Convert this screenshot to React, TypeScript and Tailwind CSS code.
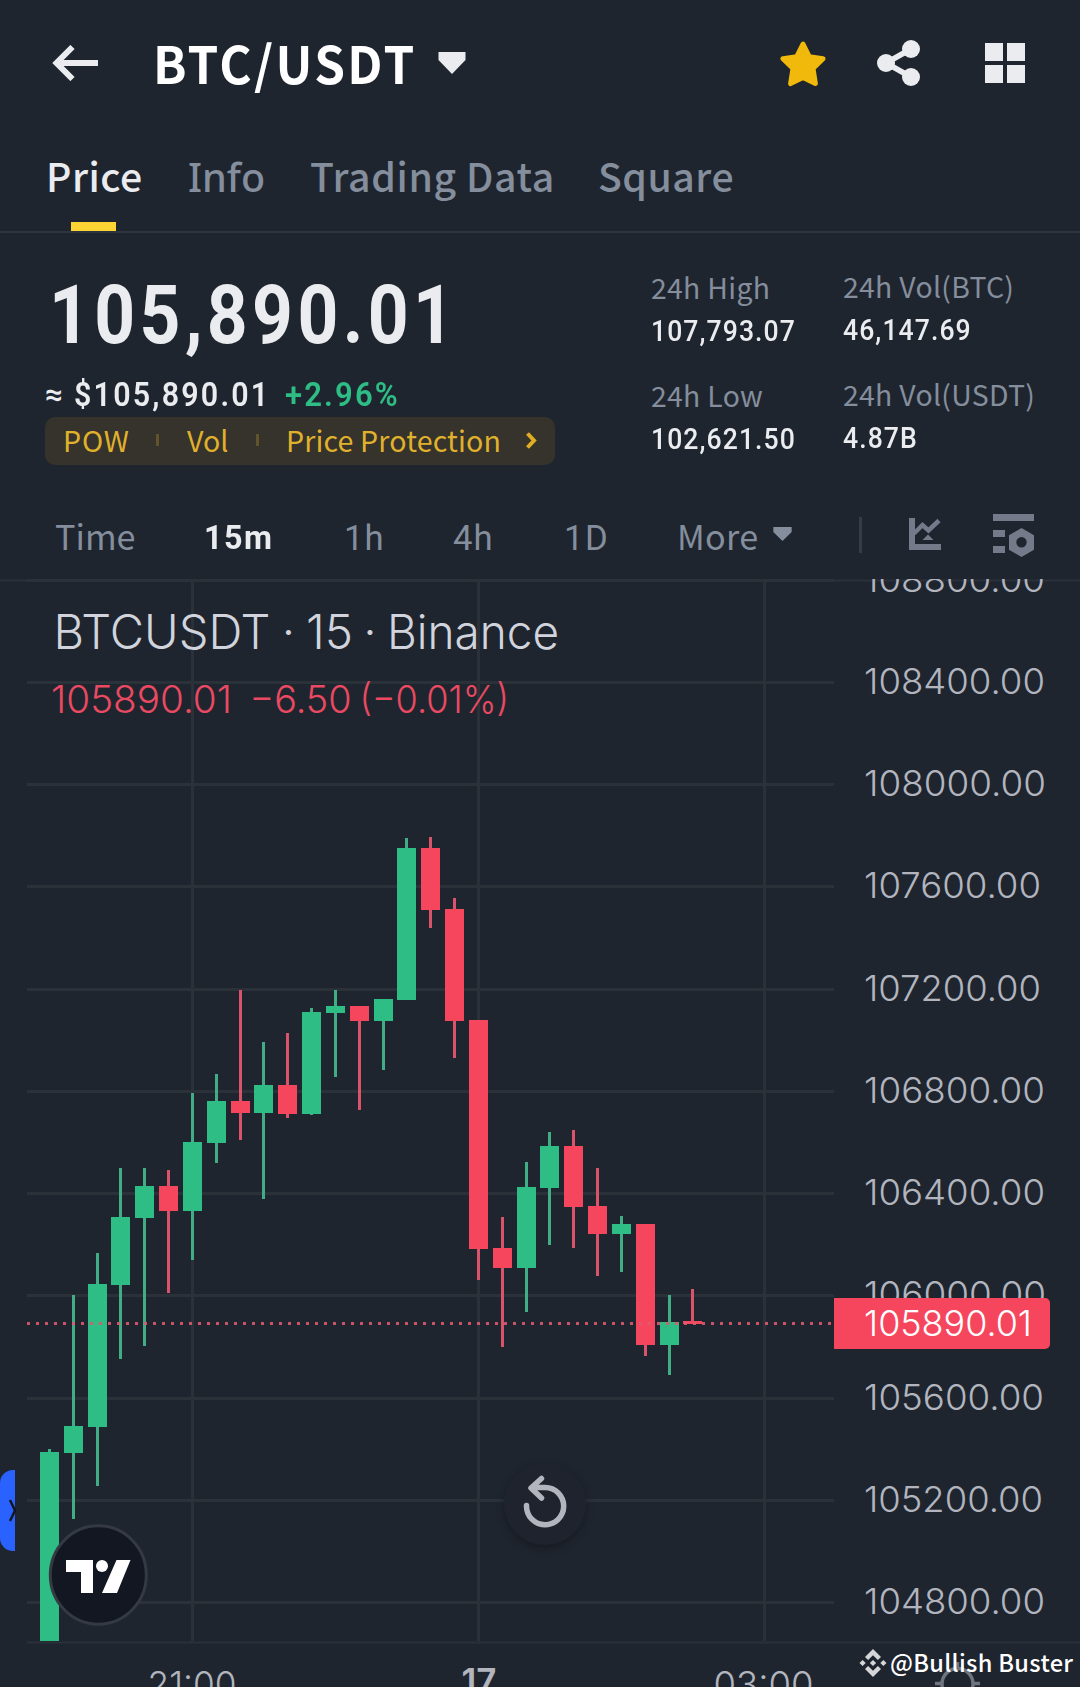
import React from "react";

const UI = "font-['Noto_Sans_CJK_SC',sans-serif]";
const NUM = "font-['Roboto',sans-serif]";

const UP = { body: "#2ebd85", wick: "#40ad85" };
const DOWN = { body: "#f6465d", wick: "#d9536a" };

// [centre x, wick top, body top, body bottom, wick bottom, rising]
const candles: [number, number, number, number, number, boolean][] = [
  [49.5, 1449, 1452, 1641, 1641, true],
  [73.5, 1295, 1426, 1453, 1519, true],
  [97.5, 1253, 1284, 1427, 1486, true],
  [120.5, 1168, 1217, 1285, 1359, true],
  [144.5, 1168, 1186, 1218, 1346, true],
  [168.5, 1170, 1186, 1211, 1293, false],
  [192.5, 1093, 1142, 1211, 1260, true],
  [216.5, 1074, 1101, 1143, 1163, true],
  [240.5, 990, 1101, 1113, 1140, false],
  [263.5, 1042, 1085, 1113, 1199, true],
  [287.5, 1033, 1085, 1114, 1118, false],
  [311.5, 1008, 1012, 1114, 1115, true],
  [335.5, 990, 1006, 1013, 1077, true],
  [359.5, 1006, 1006, 1021, 1110, false],
  [383.5, 999, 999, 1021, 1070, true],
  [406.5, 838, 848, 1000, 1000, true],
  [430.5, 837, 848, 910, 928, false],
  [454.5, 898, 909, 1021, 1058, false],
  [478.5, 1020, 1020, 1249, 1280, false],
  [502.5, 1217, 1248, 1268, 1347, false],
  [526.5, 1162, 1187, 1268, 1312, true],
  [549.5, 1132, 1146, 1188, 1245, true],
  [573.5, 1130, 1146, 1207, 1248, false],
  [597.5, 1168, 1206, 1234, 1276, false],
  [621.5, 1216, 1224, 1234, 1272, true],
  [645.5, 1224, 1224, 1345, 1356, false],
  [669.5, 1295, 1322, 1345, 1375, true],
  [692.5, 1289, 1321, 1324, 1324, false],
];

// [label, grid line y, label width]
const levels: [string, number, number][] = [
  ["108800.00", 580.5, 181],
  ["108400.00", 682.5, 181],
  ["108000.00", 784.5, 182],
  ["107600.00", 886.5, 177],
  ["107200.00", 989.5, 177],
  ["106800.00", 1091.5, 181],
  ["106400.00", 1193.5, 181],
  ["106000.00", 1295.5, 182],
  ["105600.00", 1398.5, 180],
  ["105200.00", 1500.5, 179],
  ["104800.00", 1602.5, 181],
];

const columns = [192.5, 478.5, 764.5];

function Caret({ className }: { className: string }) {
  return (
    <svg viewBox="0 0 28 22" preserveAspectRatio="none" className={className} fill="currentColor">
      <path d="M0.5 0H27.5V8L14 22L0.5 8Z" />
    </svg>
  );
}

function Header() {
  return (
    <header className="flex h-[126px] items-center pl-[52px] pr-[55px] text-[#eaecef]">
      <svg viewBox="0 0 46 36" className="h-9 w-[46px]" fill="none" stroke="currentColor" strokeWidth="6">
        <path d="M46 18H6M20.5 2L4.5 18L20.5 34" />
      </svg>
      <h1 className={`ml-[55px] -mt-[3px] w-[285px] whitespace-nowrap text-[51.4px] font-bold leading-[60px] text-white ${UI}`}>
        <span className="inline-block origin-left scale-x-[0.96] tracking-[2.5px]">BTC/USDT</span>
      </h1>
      <Caret className="h-[22px] w-7" />
      <svg viewBox="0 0 46 46" className="ml-auto mt-0.5 h-[46px] w-[46px]">
        <path
          d="M23 3L29.2 15.6L43 17.6L33 27.4L35.4 42.6L23 36.6L10.6 42.6L13 27.4L3 17.6L16.8 15.6Z"
          fill="#f0b90b"
          stroke="#f0b90b"
          strokeWidth="5"
          strokeLinejoin="round"
        />
      </svg>
      <svg viewBox="0 0 43 46" className="ml-[51px] h-[46px] w-[43px]" fill="currentColor">
        <circle cx="9" cy="23" r="9" />
        <circle cx="34" cy="9" r="9" />
        <circle cx="34" cy="37" r="9" />
        <path d="M34 9L9 23L34 37" fill="none" stroke="currentColor" strokeWidth="5.5" />
      </svg>
      <div className="ml-[65px] grid h-10 w-10 grid-cols-2 gap-1">
        {[0, 1, 2, 3].map((i) => (
          <span key={i} className="bg-current" />
        ))}
      </div>
    </header>
  );
}

function Tabs() {
  return (
    <nav className={`flex h-[107px] border-b-2 border-[#2e343e] pl-[46px] pt-[19px] text-[39.2px] font-medium leading-[60px] text-[#848e9c] ${UI}`}>
      <div className="relative w-[142px] tracking-[0.5px] text-[#eaecef]">
        Price
        <span className="absolute left-[25px] top-[77px] h-[9px] w-[45px] bg-[#fcd535]" />
      </div>
      <div className="w-[122px] font-['Noto_Sans',sans-serif] text-[39.6px] leading-[64px]">Info</div>
      <div className="w-[288px] tracking-[0.6px]">Trading Data</div>
      <div className="tracking-[0.5px]">Square</div>
    </nav>
  );
}

function Stat({ label, value }: { label: string; value: string }) {
  return (
    <div className="whitespace-nowrap">
      <div className={`text-[28.4px] leading-10 tracking-[0.3px] text-[#848e9c] ${UI}`}>{label}</div>
      <div className={`mt-[3px] text-[28.6px] font-medium leading-[42px] text-[#eaecef] ${NUM}`}>
        <span className="inline-block origin-left scale-x-[0.93] tracking-[1.15px]">{value}</span>
      </div>
    </div>
  );
}

function Summary() {
  return (
    <section className="flex h-[257px] pl-[45px]">
      <div className="w-[606px] pt-[38px] text-[#eaecef]">
        <div className={`pl-1 text-[81px] font-bold leading-[90px] ${NUM}`}>
          <span className="inline-block origin-left scale-x-[0.88] tracking-[5px]">105,890.01</span>
        </div>
        <div className={`mt-[14px] flex text-[33.8px] font-semibold leading-10 ${NUM}`}>
          <span className="w-[29px] text-[31px]">≈</span>
          <span className="w-[211px]">
            <span className="inline-block origin-left scale-x-[0.9] tracking-[2.45px]">$105,890.01</span>
          </span>
          <span className="inline-block origin-left scale-x-[0.92] tracking-[2.3px] text-[#2ebd85]">+2.96%</span>
        </div>
        <div className={`mt-0.5 flex h-12 w-[510px] items-center whitespace-nowrap rounded-[10px] bg-[#35332b] pl-[18px] text-[28.6px] leading-10 text-[#e0b12c] ${UI}`}>
          <span className="-mt-0.5 w-[93px] tracking-[0.8px]">POW</span>
          <span className="-mt-0.5 h-3 w-[3px] bg-[#62542a]" />
          <span className="-mt-0.5 ml-7 w-[69px]">Vol</span>
          <span className="-mt-0.5 h-3 w-[3px] bg-[#62542a]" />
          <span className="-mt-0.5 ml-[27px] w-[220px] tracking-[0.15px]">Price Protection</span>
          <svg viewBox="0 0 11 17" className="-mt-0.5 ml-5 h-[17px] w-[11px]" fill="none" stroke="#e0ae22" strokeWidth="4">
            <path d="M1.5 1.5L8 8.5L1.5 15.5" />
          </svg>
        </div>
      </div>
      <div className="flex w-[192px] flex-col gap-[23px] pt-[34px]">
        <Stat label="24h High" value="107,793.07" />
        <Stat label="24h Low" value="102,621.50" />
      </div>
      <div className="flex flex-col gap-[23px] pt-[33px]">
        <Stat label="24h Vol(BTC)" value="46,147.69" />
        <Stat label="24h Vol(USDT)" value="4.87B" />
      </div>
    </section>
  );
}

function Intervals() {
  return (
    <div className={`flex h-[89px] items-center whitespace-nowrap pl-[55px] text-[34.7px] leading-[50px] text-[#848e9c] ${NUM}`}>
      <span className={`w-[149px] text-[34.2px] ${UI}`}>Time</span>
      <span className="mt-1 w-[140px] text-[34px] font-bold text-[#eaecef]">
        <span className="inline-block origin-left scale-x-[0.95] tracking-[1.5px]">15m</span>
      </span>
      <span className="mt-1.5 w-[109px] tracking-[1px]">1h</span>
      <span className="mt-1.5 w-[111px] tracking-[1px]">4h</span>
      <span className="mt-1.5 w-[113px] tracking-[1.5px]">1D</span>
      <span className={`w-24 text-[34.2px] tracking-[0.3px] ${UI}`}>More</span>
      <Caret className="-mt-0.5 h-[14px] w-[19px]" />
      <span className="ml-[67px] h-9 w-[3px] bg-[#363c47]" />
      <svg viewBox="0 0 32 32" className="-mt-0.5 ml-[47px] h-8 w-8 text-[#737b8a]" fill="currentColor">
        <path d="M0 0H6V26H32V32H0Z" />
        <path d="M5 15.5L13.5 7L19.5 12.5L30 2.5" fill="none" stroke="currentColor" strokeWidth="4.5" />
        <path d="M13.5 22L19 16.5L24.5 22Z" />
      </svg>
      <svg viewBox="0 0 41 43" className="ml-[52px] mt-0.5 h-[43px] w-[41px] text-[#737b8a]" fill="currentColor">
        <path d="M0 0H41V7H0ZM0 16H12V23H0ZM0 32H12V39H0Z" />
        <path fillRule="evenodd" d="M28.5 14L41 21.3V35.7L28.5 43L16 35.7V21.3ZM28.5 23A5.2 5.2 0 1 0 28.5 33.4A5.2 5.2 0 1 0 28.5 23Z" />
      </svg>
    </div>
  );
}

function Chart() {
  return (
    <svg viewBox="0 579 1080 1108" className="block h-[1108px] w-[1080px] font-['Inter',sans-serif]">
      <g fill="#2b3139">
        <rect x="0" y="579.5" width="1080" height="2" />
        {levels.map(([label, y]) => (
          <rect key={label} x="27" y={y - 1.5} width="807" height="3" />
        ))}
        {columns.map((x) => (
          <rect key={x} x={x - 1.5} y="579" width="3" height="1062" />
        ))}
        <rect x="27" y="1641.5" width="1053" height="2" />
      </g>

      {candles.map(([x, wickTop, top, bottom, wickBottom, rising]) => {
        const c = rising ? UP : DOWN;
        return (
          <g key={x}>
            <rect x={x - 1.5} y={wickTop} width="3" height={wickBottom - wickTop} fill={c.wick} />
            <rect x={x - 9.5} y={top} width="19" height={bottom - top} fill={c.body} />
          </g>
        );
      })}
      <path d="M27 1323.5H834" stroke="#e0596d" strokeWidth="3" strokeDasharray="3 6" opacity="0.9" />

      <g fontWeight="300">
        <g fontSize="47.3" fill="#d1d4dc">
          <text x="53.5" y="648.5" textLength="217" lengthAdjust="spacingAndGlyphs">BTCUSDT</text>
          <text x="288.5" y="648.5" textAnchor="middle">·</text>
          <text x="306" y="648.5" textLength="47" lengthAdjust="spacingAndGlyphs">15</text>
          <text x="370" y="648.5" textAnchor="middle">·</text>
          <text x="387" y="648.5" textLength="172" lengthAdjust="spacingAndGlyphs">Binance</text>
        </g>
        <g fontSize="38.5" fill="#ea4a61">
          <text x="51" y="712.5" textLength="181" lengthAdjust="spacingAndGlyphs">105890.01</text>
          <text x="249.5" y="712.5" textLength="102" lengthAdjust="spacingAndGlyphs">−6.50</text>
          <text x="359.5" y="712.5" textLength="149.5" lengthAdjust="spacingAndGlyphs">(−0.01%)</text>
        </g>
        <g fontSize="35" fill="#b2b5be">
          {levels.map(([label, y, width]) => (
            <text key={label} x="864" y={y + 11.5} textLength={width} lengthAdjust="spacingAndGlyphs">
              {label}
            </text>
          ))}
          <text x="147.5" y="1697" textLength="89" lengthAdjust="spacingAndGlyphs">21:00</text>
          <text x="461.5" y="1694" textLength="35" fontWeight="600" lengthAdjust="spacingAndGlyphs">17</text>
          <text x="713.5" y="1697" textLength="100" lengthAdjust="spacingAndGlyphs">03:00</text>
        </g>
        <path d="M834 1298H1045A5 5 0 0 1 1050 1303V1344A5 5 0 0 1 1045 1349H834Z" fill="#f6465d" />
        <text x="864" y="1336" fontSize="35" textLength="168" lengthAdjust="spacingAndGlyphs" fill="#ffffff">
          105890.01
        </text>
      </g>

      <g>
        <path d="M15 1470H13A13 13 0 0 0 0 1483V1538A13 13 0 0 0 13 1551H15Z" fill="#2962ff" />
        <path d="M10 1500L15 1510.5L10 1521" fill="none" stroke="#131722" strokeWidth="2.5" />
      </g>

      <g>
        <ellipse cx="98.3" cy="1575" rx="48" ry="49.2" fill="#131722" stroke="#343942" strokeWidth="3" />
        <path d="M66 1560H93V1593H81V1572H66ZM116.5 1560H130.5L117 1593H102Z" fill="#ffffff" />
        <circle cx="102" cy="1566" r="6" fill="#ffffff" />
      </g>

      <defs>
        <filter id="drop" x="-30%" y="-30%" width="160%" height="160%" colorInterpolationFilters="sRGB">
          <feDropShadow dx="0" dy="3" stdDeviation="4" floodColor="#000000" floodOpacity="0.3" />
        </filter>
      </defs>
      <circle cx="545" cy="1504" r="41" fill="#1f232d" filter="url(#drop)" />
      <path
        d="M526.5 1505.5A18.6 18.6 0 1 0 545 1487.5H533M541.5 1478.5L531 1488L541.5 1498"
        fill="none"
        stroke="#b2b5be"
        strokeWidth="5.5"
        strokeLinecap="round"
        strokeLinejoin="round"
      />

      <g fill="none" stroke="#70747e" strokeWidth="3.5">
        <circle cx="957.5" cy="1684" r="15.5" />
        <path d="M935 1683.5H943M972 1683.5H980M957.5 1662V1669" />
      </g>

      <g fill="#d5d6d8" transform="translate(859.5 1649)">
        <path d="M13.5 0L21.5 8L18.4 11.1L13.5 6.2L8.6 11.1L5.5 8Z" />
        <path d="M13.5 28L21.5 20L18.4 16.9L13.5 21.8L8.6 16.9L5.5 20Z" />
        <path d="M13.5 10.9L16.6 14L13.5 17.1L10.4 14ZM3.1 10.9L6.2 14L3.1 17.1L0 14ZM23.9 10.9L27 14L23.9 17.1L20.8 14Z" />
      </g>
      <text x="890" y="1672" fontSize="23.6" fontWeight="500" textLength="183" fill="#ffffff" className="font-['Noto_Sans_CJK_SC',sans-serif]">
        @Bullish Buster
      </text>
    </svg>
  );
}

export default function App() {
  return (
    <main className="h-[1687px] w-[1080px] overflow-hidden bg-[#1f252f]">
      <Header />
      <Tabs />
      <Summary />
      <Intervals />
      <Chart />
    </main>
  );
}
